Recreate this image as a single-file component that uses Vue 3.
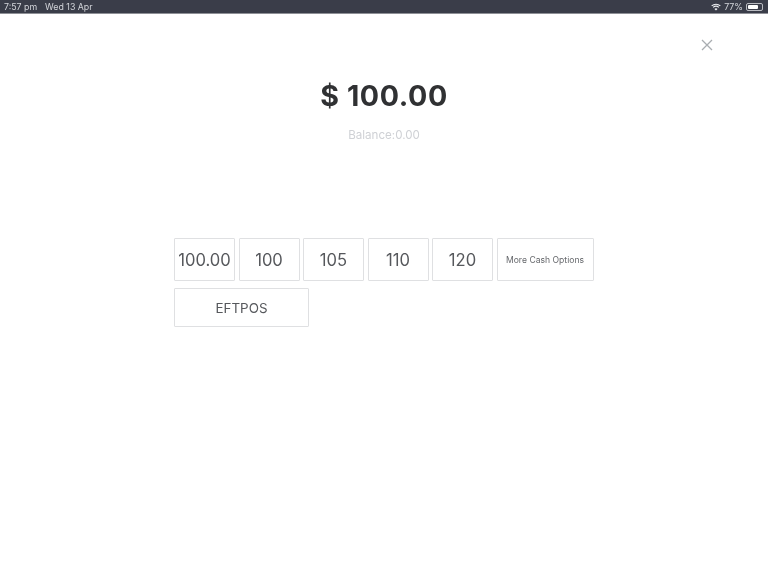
<script setup>
const cash = ['100.00', '100', '105', '110', '120']
</script>

<template>
  <div class="page">
    <header class="status">
      <div class="status-left">
        <span>7:57 pm</span>
        <span>Wed 13 Apr</span>
      </div>
      <div class="status-right">
        <svg class="wifi" viewBox="0 0 12 9" width="10" height="8">
          <path d="M0.8 3.2 C3.7 0.4 8.3 0.4 11.2 3.2 M2.6 5 C4.5 3.3 7.5 3.3 9.4 5" stroke="#eef0f3" stroke-width="1.3" fill="none" />
          <path d="M6 8.8 L4.1 6.8 C5.2 5.9 6.8 5.9 7.9 6.8 Z" fill="#eef0f3" />
        </svg>
        <span>77%</span>
        <span class="battery"><span class="battery-fill"></span></span>
      </div>
    </header>

    <main class="content">
      <div class="close-row">
        <svg viewBox="0 0 12 12" width="12" height="12">
          <path d="M1 1 L11 11 M11 1 L1 11" stroke="#a9adb1" stroke-width="1.3" fill="none" />
        </svg>
      </div>
      <div class="amount">$ 100.00</div>
      <div class="balance">Balance:0.00</div>
      <div class="options">
        <div class="row row-cash">
          <button v-for="c in cash" :key="c" class="opt cash">{{ c }}</button>
          <button class="opt more">More Cash Options</button>
        </div>
        <div class="row">
          <button class="opt eftpos">EFTPOS</button>
        </div>
      </div>
    </main>
  </div>
</template>

<style>
html, body { margin: 0; background: #fff; }
</style>

<style scoped>
.page {
  width: 768px;
  height: 576px;
  overflow: hidden;
  background: #fff;
  font-family: Inter, "Liberation Sans", sans-serif;
  filter: blur(0.55px);
}
.status {
  height: 13px;
  background: #3a3d49;
  color: #d3d5da;
  font-size: 8.8px;
  display: flex;
  justify-content: space-between;
  align-items: center;
  padding: 0 5px 0 4px;
  border-bottom: 1px solid #8e9096;
}
.status-left { display: flex; gap: 8px; }
.status-right { display: flex; align-items: center; gap: 3px; }
.battery {
  width: 13px;
  height: 4px;
  border: 1px solid #b9bbc1;
  border-radius: 2px;
  padding: 1px;
  display: flex;
  box-sizing: content-box;
}
.battery-fill { width: 80%; background: #fff; border-radius: 1px; }
.content {
  display: flex;
  flex-direction: column;
  align-items: center;
}
.close-row {
  align-self: stretch;
  display: flex;
  justify-content: flex-end;
  padding: 25px 55px 0 0;
  height: 12px;
}
.amount {
  margin-top: 28px;
  font-size: 28.6px;
  line-height: 34px;
  font-weight: 700;
  color: #303133;
  letter-spacing: 0.6px;
}
.balance {
  margin-top: 14px;
  font-size: 11.6px;
  line-height: 16px;
  color: #cfd1d5;
}
.options {
  align-self: flex-start;
  margin: 95px 0 0 174px;
  display: flex;
  flex-direction: column;
  gap: 7px;
}
.row { display: flex; gap: 3.5px; }
.opt {
  box-sizing: border-box;
  background: #fff;
  border: 1px solid #dfe0e2;
  border-radius: 1px;
  color: #56585c;
  font-family: inherit;
  padding: 0;
  height: 43px;
}
.cash { width: 61px; font-size: 16.6px; }
.more { width: 97px; font-size: 8.6px; color: #66686c; }
.eftpos { width: 135px; height: 39px; font-size: 13.4px; }
</style>
